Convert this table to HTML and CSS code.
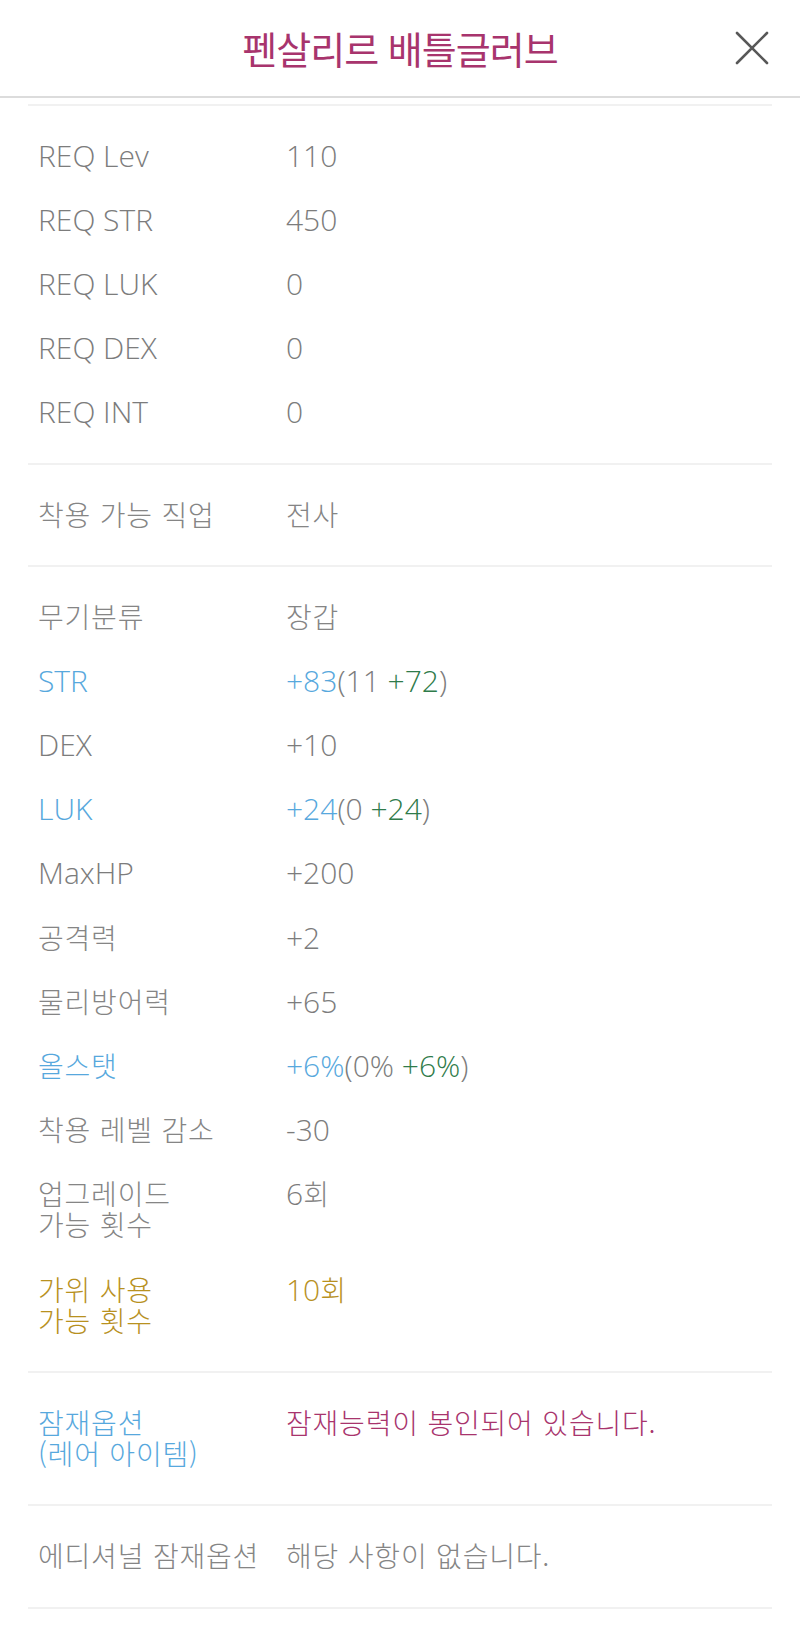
FILE: index.html
```html
<!DOCTYPE html>
<html lang="ko">
<head>
<meta charset="utf-8">
<title>펜살리르 배틀글러브</title>
<link rel="stylesheet" href="styles.css">
</head>
<body>
<header class="header">
  <div class="spacer"></div>
  <h1 class="title">펜살리르 배틀글러브</h1>
  <div class="close-wrap">
    <svg class="close" width="34" height="34" viewBox="0 0 34 34" aria-label="닫기">
      <path d="M2 2 L32 32 M32 2 L2 32" stroke="#585858" stroke-width="2.6" fill="none" stroke-linecap="round"/>
    </svg>
  </div>
</header>
<main class="content">
  <section class="section">
    <div class="row"><div class="label">REQ Lev</div><div class="value">110</div></div>
    <div class="row"><div class="label">REQ STR</div><div class="value">450</div></div>
    <div class="row"><div class="label">REQ LUK</div><div class="value">0</div></div>
    <div class="row"><div class="label">REQ DEX</div><div class="value">0</div></div>
    <div class="row"><div class="label">REQ INT</div><div class="value">0</div></div>
  </section>
  <section class="section">
    <div class="row"><div class="label ko">착용 가능 직업</div><div class="value ko">전사</div></div>
  </section>
  <section class="section">
    <div class="row"><div class="label ko">무기분류</div><div class="value ko">장갑</div></div>
    <div class="row"><div class="label blue">STR</div><div class="value"><span class="blue">+83</span>(11 <span class="green">+72</span>)</div></div>
    <div class="row"><div class="label">DEX</div><div class="value">+10</div></div>
    <div class="row"><div class="label blue">LUK</div><div class="value"><span class="blue">+24</span>(0 <span class="green">+24</span>)</div></div>
    <div class="row"><div class="label">MaxHP</div><div class="value">+200</div></div>
    <div class="row"><div class="label ko">공격력</div><div class="value">+2</div></div>
    <div class="row"><div class="label ko">물리방어력</div><div class="value">+65</div></div>
    <div class="row"><div class="label ko blue">올스탯</div><div class="value"><span class="blue">+6%</span>(0% <span class="green">+6%</span>)</div></div>
    <div class="row"><div class="label ko">착용 레벨 감소</div><div class="value">-30</div></div>
    <div class="row"><div class="label ko">업그레이드<br>가능 횟수</div><div class="value">6<span class="ko">회</span></div></div>
    <div class="row gold"><div class="label ko">가위 사용<br>가능 횟수</div><div class="value">10<span class="ko">회</span></div></div>
  </section>
  <section class="section">
    <div class="row"><div class="label ko blue">잠재옵션<br>(레어 아이템)</div><div class="value ko crimson">잠재능력이 봉인되어 있습니다.</div></div>
  </section>
  <section class="section last">
    <div class="row"><div class="label ko">에디셔널 잠재옵션</div><div class="value ko">해당 사항이 없습니다.</div></div>
  </section>
</main>
</body>
</html>
```

FILE: styles.css
```css
html, body {
  margin: 0;
  padding: 0;
  background: #ffffff;
}

body {
  font-family: "Open Sans", "Noto Sans CJK KR", sans-serif;
  color: #7c7c7c;
}

.header {
  height: 96px;
  border-bottom: 2px solid #dcdcdc;
  display: grid;
  grid-template-columns: 1fr auto 1fr;
  align-items: center;
}

.title {
  margin: 0;
  font-family: "Noto Sans CJK KR", sans-serif;
  font-weight: 400;
  font-size: 38px;
  letter-spacing: -1px;
  color: #a8346d;
  line-height: 1;
}

.close-wrap {
  display: flex;
  justify-content: flex-end;
  padding-right: 31px;
}

.close {
  display: block;
}

.content {
  padding: 6px 28px 0;
}

.section {
  border-top: 2px solid #f1f1f1;
  padding: 17px 0 19px;
}

.section.last {
  border-bottom: 2px solid #f1f1f1;
}

.row {
  display: grid;
  grid-template-columns: 248px 1fr;
  padding: 16.6px 10px;
  font-size: 30px;
  line-height: 31px;
  font-weight: 300;
}

.label,
.value {
  white-space: nowrap;
}

.ko {
  font-family: "Noto Sans CJK KR", sans-serif;
  font-size: 28px;
  letter-spacing: 0.8px;
  font-weight: 300;
  color: #858585;
}

.blue, .label.blue { color: #57a8dd; }
.green { color: #2f7b4a; }
.gold, .gold .ko { color: #b8911f; }
.crimson, .value.crimson { color: #a8346d; }
```
